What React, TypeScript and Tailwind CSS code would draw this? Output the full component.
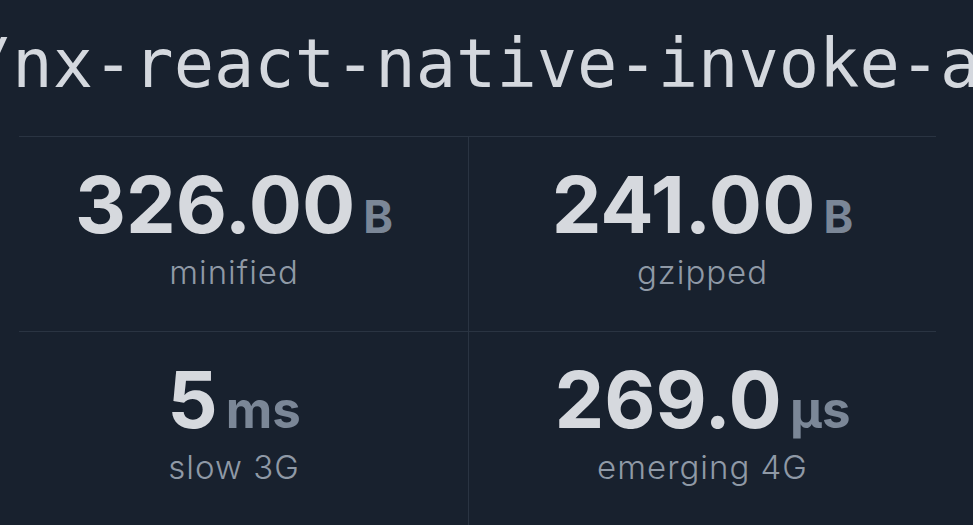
import React from "react";

const sans = { fontFamily: "Inter, 'Noto Sans', sans-serif" };

function Stat({
  value,
  unit,
  label,
  left,
  big,
}: {
  value: string;
  unit: string;
  label: string;
  left?: boolean;
  big?: boolean;
}) {
  return (
    <div
      className={
        left
          ? "ml-[19px] pr-[19px] border-t border-[#2a3442] flex flex-col items-center pt-[28px]"
          : "border-t border-l border-[#2a3442] flex flex-col items-center pt-[28px]"
      }
      style={sans}
    >
      <div className="flex items-baseline">
        <span className="text-[79px] leading-none font-bold text-[#d6d9de]">{value}</span>
        <span
          className={
            big
              ? "ml-[8px] text-[51px] leading-none font-bold text-[#7b8797]"
              : "ml-[8px] text-[45px] leading-none font-bold text-[#7b8797]"
          }
        >
          {unit}
        </span>
      </div>
      <div className="mt-[12px] text-[33px] leading-none font-light text-[#8f99a6] tracking-[1px]">{label}</div>
    </div>
  );
}

export default function App() {
  return (
    <div className="w-[973px] h-[525px] overflow-hidden bg-[#18212e]">
      <div
        className="pt-[31px] h-[136px] whitespace-nowrap text-[67px] leading-none text-[#d4d8de] -ml-[28px]"
        style={{ fontFamily: "'DejaVu Sans Mono', monospace" }}
      >
        /nx-react-native-invoke-app
      </div>
      <div className="w-[936px] grid grid-cols-[468px_468px] grid-rows-[195px_200px]">
        <Stat left value="326.00" unit="B" label="minified" />
        <Stat value="241.00" unit="B" label="gzipped" />
        <Stat left big value="5" unit="ms" label="slow 3G" />
        <Stat big value="269.0" unit="µs" label="emerging 4G" />
      </div>
    </div>
  );
}
